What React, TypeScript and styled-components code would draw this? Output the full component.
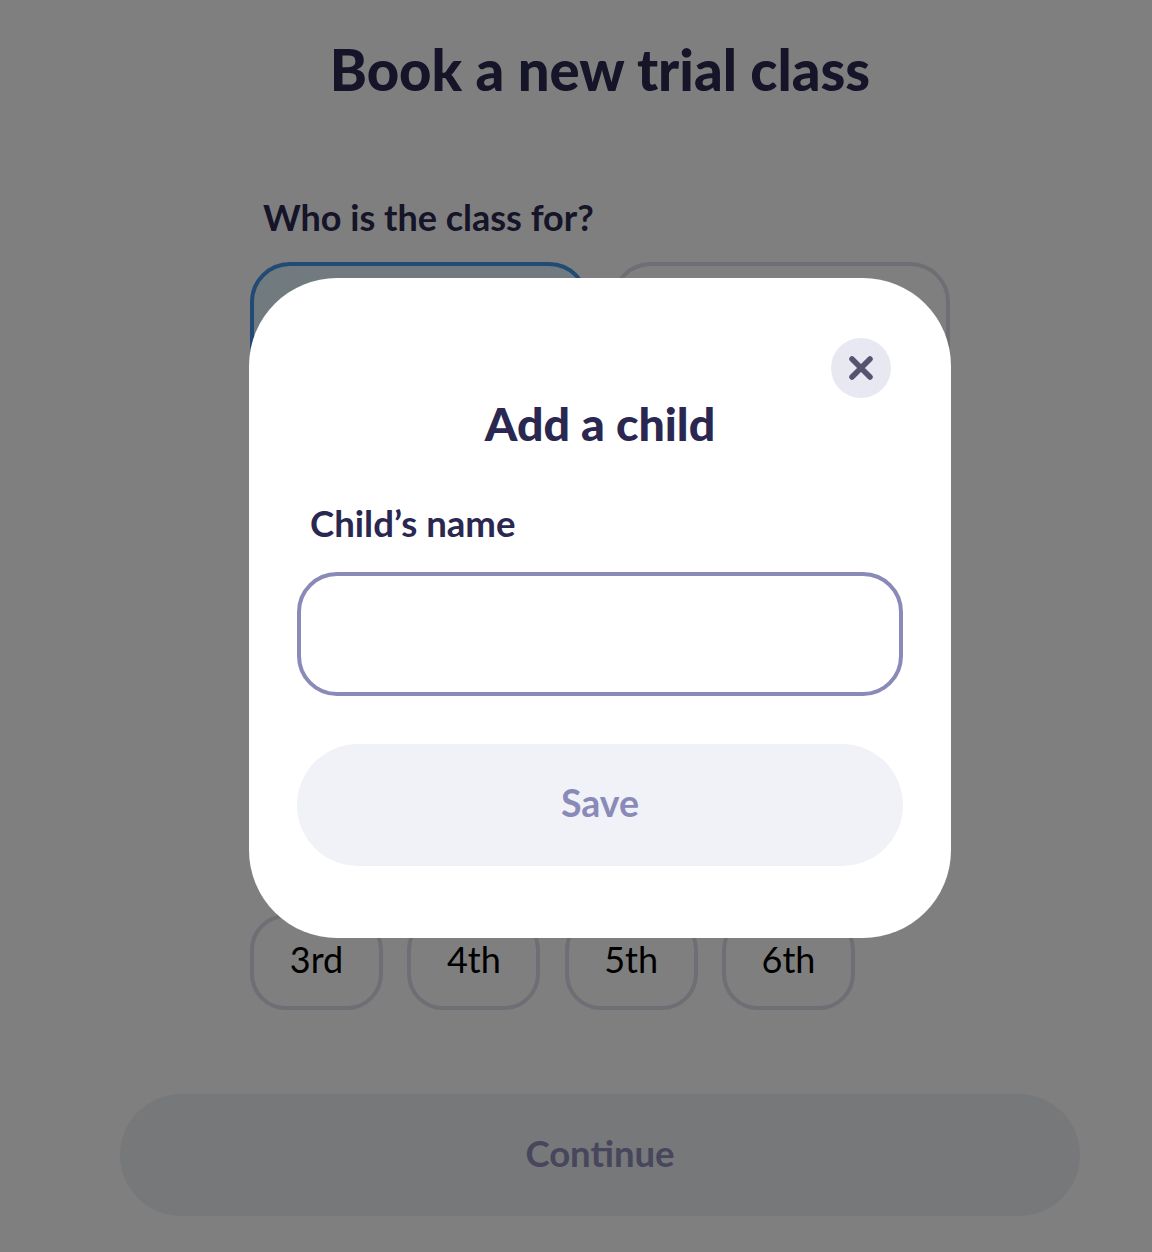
import React from "react";
import styled, { createGlobalStyle } from "styled-components";

const GRADES = ["3rd", "4th", "5th", "6th"];

const App: React.FC = () => {
  return (
    <>
      <GlobalStyle />
      <Page>
        <Title>Book a new trial class</Title>
        <Form>
          <SectionLabel>Who is the class for?</SectionLabel>
          <ChildRow>
            <ChildCard $selected />
            <ChildCard />
          </ChildRow>
          <GradeRow>
            {GRADES.map((grade) => (
              <GradeOption key={grade}>{grade}</GradeOption>
            ))}
          </GradeRow>
        </Form>
        <ContinueButton disabled>Continue</ContinueButton>
      </Page>
      <Overlay>
        <Modal>
          <CloseButton aria-label="Close">
            <svg width="26" height="26" viewBox="0 0 26 26" fill="none">
              <path
                d="M4 4L22 22M22 4L4 22"
                stroke="#55536f"
                strokeWidth="5.5"
                strokeLinecap="round"
              />
            </svg>
          </CloseButton>
          <ModalTitle>Add a child</ModalTitle>
          <FieldLabel htmlFor="child-name">Child’s name</FieldLabel>
          <NameInput id="child-name" type="text" />
          <SaveButton disabled>Save</SaveButton>
        </Modal>
      </Overlay>
    </>
  );
};

const GlobalStyle = createGlobalStyle`
  html, body {
    margin: 0;
    padding: 0;
    width: 1152px;
    height: 1252px;
    overflow: hidden;
    background: #ffffff;
    font-family: "Lato", "Liberation Sans", sans-serif;
  }
  * {
    box-sizing: border-box;
  }
`;

const Page = styled.div`
  width: 1200px;
  height: 1252px;
  display: flex;
  flex-direction: column;
  align-items: center;
  padding-top: 38px;
`;

const Title = styled.h1`
  margin: 0;
  font-size: 56.2px;
  line-height: 64px;
  font-weight: 900;
  color: #2a2850;
  white-space: nowrap;
`;

const Form = styled.div`
  width: 700px;
  margin-top: 93px;
`;

const SectionLabel = styled.div`
  margin-left: 13px;
  font-size: 36px;
  line-height: 44px;
  font-weight: 700;
  color: #2a2850;
`;

const ChildRow = styled.div`
  display: flex;
  justify-content: space-between;
  margin-top: 23px;
`;

const ChildCard = styled.div<{ $selected?: boolean }>`
  width: 339px;
  height: 300px;
  border-radius: 40px;
  border: 4px solid ${(props) => (props.$selected ? "#4294ea" : "#dddde8")};
  background: ${(props) => (props.$selected ? "#e2f6ff" : "transparent")};
`;

const GradeRow = styled.div`
  display: flex;
  gap: 24.33px;
  margin-top: 352px;
`;

const GradeOption = styled.div`
  width: 133px;
  height: 96px;
  padding-bottom: 6px;
  border-radius: 36px;
  border: 4px solid #dddde8;
  display: flex;
  align-items: center;
  justify-content: center;
  font-size: 36px;
  color: #000000;
`;

const ContinueButton = styled.button`
  width: 960px;
  height: 122px;
  margin-top: 84px;
  padding: 0 0 4px;
  border: none;
  border-radius: 61px;
  background: #eff0f4;
  color: #8f8cb8;
  font-family: inherit;
  font-size: 36.5px;
  font-weight: 700;
`;

const Overlay = styled.div`
  position: fixed;
  inset: 0;
  background: rgba(0, 0, 0, 0.5);
`;

const Modal = styled.div`
  position: absolute;
  left: 249px;
  top: 278px;
  width: 702px;
  height: 660px;
  border-radius: 88px;
  background: #ffffff;
  padding: 119px 48px 0;
  display: flex;
  flex-direction: column;
`;

const CloseButton = styled.button`
  position: absolute;
  top: 60px;
  right: 60px;
  width: 60px;
  height: 60px;
  padding: 0;
  border: none;
  border-radius: 50%;
  background: #e8e8f3;
  display: flex;
  align-items: center;
  justify-content: center;
`;

const ModalTitle = styled.h2`
  margin: 0;
  font-size: 46.5px;
  line-height: 52px;
  font-weight: 900;
  text-align: center;
  color: #2a2850;
`;

const FieldLabel = styled.label`
  margin: 52px 0 0 13px;
  font-size: 36.6px;
  line-height: 44px;
  font-weight: 700;
  color: #2a2850;
`;

const NameInput = styled.input`
  width: 100%;
  height: 124px;
  margin-top: 27px;
  border: 4px solid #8a8ab8;
  border-radius: 40px;
  background: #ffffff;
  outline: none;
  font-family: inherit;
  font-size: 36px;
`;

const SaveButton = styled.button`
  width: 100%;
  height: 122px;
  margin-top: 48px;
  padding: 0 0 5px;
  border: none;
  border-radius: 61px;
  background: #f1f2f7;
  color: #8a8ab8;
  font-family: inherit;
  font-size: 37.5px;
  font-weight: 700;
`;

export default App;
